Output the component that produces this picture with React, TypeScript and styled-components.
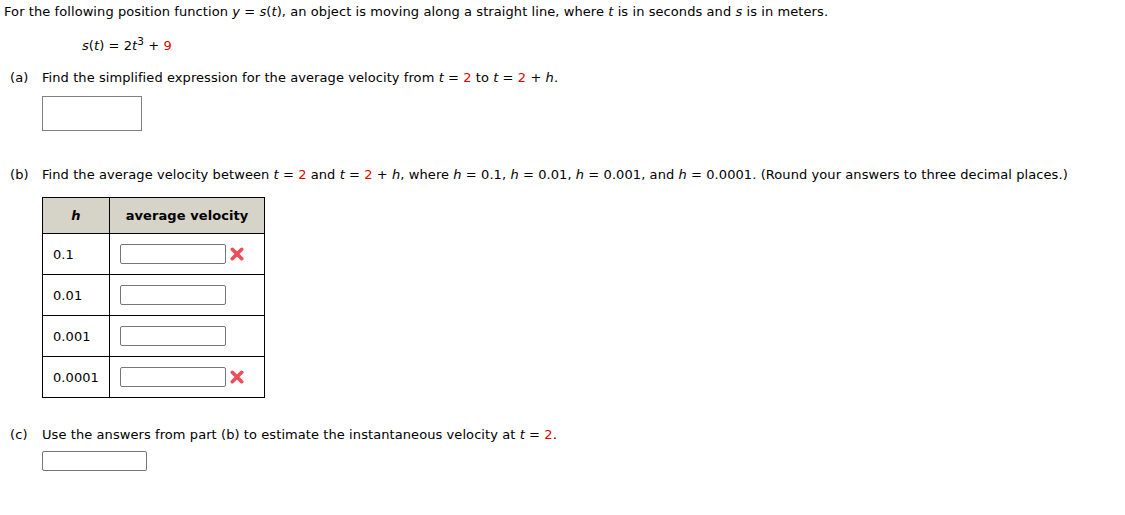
import React from "react";
import styled, { createGlobalStyle } from "styled-components";

const Global = createGlobalStyle`
  html, body { margin: 0; padding: 0; background: #fff; }
  body { font-family: Verdana, "DejaVu Sans", sans-serif; font-size: 13px; color: #000; letter-spacing: 0.08px; }
`;

const Page = styled.div`
  padding: 4px 0 0 4px;
  line-height: 15px;
`;

const Intro = styled.p`
  margin: 0;
`;

const Formula = styled.div`
  margin: 19px 0 0 78px;
`;

const Sup = styled.sup`
  font-size: 10.5px;
  line-height: 0;
`;

const Part = styled.div<{ $top: number }>`
  display: flex;
  margin-top: ${(p) => p.$top}px;
  padding-left: 6px;
`;

const Label = styled.span`
  width: 32px;
  flex: none;
`;

const V = styled.i``;
const Red = styled.span`
  color: #e00000;
`;

const Indent = styled.div<{ $top: number }>`
  margin: ${(p) => p.$top}px 0 0 38px;
`;

const BigBox = styled.div`
  width: 98px;
  height: 33px;
  border: 1px solid #808080;
`;

const Field = styled.div<{ $w: number }>`
  width: ${(p) => p.$w}px;
  height: 18px;
  border: 1px solid #767676;
  border-radius: 2px;
  background: #fff;
`;

const Table = styled.table`
  border-collapse: collapse;
  font-size: 13px;
  th, td { border: 1px solid #000; }
`;

const Head = styled.th<{ $w: number }>`
  background: #d6d3c8;
  height: 35px;
  width: ${(p) => p.$w}px;
  padding: 0;
  font-weight: bold;
  text-align: center;
`;

const Cell = styled.td`
  height: 40px;
  padding: 0 0 0 10px;
  text-align: left;
`;

const AnswerRow = styled.div`
  display: flex;
  align-items: center;
  gap: 4px;
`;

const Wrong = () => (
  <svg width="14" height="14" viewBox="0 0 14 14">
    <path d="M2.3 2.3 L11.7 11.7 M11.7 2.3 L2.3 11.7" stroke="#ec4f57" strokeWidth="3.6" strokeLinecap="round" />
  </svg>
);

const rows: { h: string; wrong: boolean }[] = [
  { h: "0.1", wrong: true },
  { h: "0.01", wrong: false },
  { h: "0.001", wrong: false },
  { h: "0.0001", wrong: true },
];

export default function App() {
  return (
    <Page>
      <Global />
      <Intro>
        For the following position function <V>y</V> = <V>s</V>(<V>t</V>), an object is moving along a straight line, where <V>t</V> is in seconds and <V>s</V> is in meters.
      </Intro>
      <Formula>
        <V>s</V>(<V>t</V>) = 2<V>t</V><Sup>3</Sup> + <Red>9</Red>
      </Formula>
      <Part $top={17}>
        <Label>(a)</Label>
        <span>
          Find the simplified expression for the average velocity from <V>t</V> = <Red>2</Red> to <V>t</V> = <Red>2</Red> + <V>h</V>.
        </span>
      </Part>
      <Indent $top={11}>
        <BigBox />
      </Indent>
      <Part $top={36}>
        <Label>(b)</Label>
        <span>
          Find the average velocity between <V>t</V> = <Red>2</Red> and <V>t</V> = <Red>2</Red> + <V>h</V>, where <V>h</V> = 0.1, <V>h</V> = 0.01, <V>h</V> = 0.001, and <V>h</V> = 0.0001. (Round your answers to three decimal places.)
        </span>
      </Part>
      <Indent $top={15}>
        <Table>
          <thead>
            <tr>
              <Head $w={66}><V>h</V></Head>
              <Head $w={154}>average velocity</Head>
            </tr>
          </thead>
          <tbody>
            {rows.map((r) => (
              <tr key={r.h}>
                <Cell>{r.h}</Cell>
                <Cell>
                  <AnswerRow>
                    <Field $w={104} />
                    {r.wrong && <Wrong />}
                  </AnswerRow>
                </Cell>
              </tr>
            ))}
          </tbody>
        </Table>
      </Indent>
      <Part $top={29}>
        <Label>(c)</Label>
        <span>
          Use the answers from part (b) to estimate the instantaneous velocity at <V>t</V> = <Red>2</Red>.
        </span>
      </Part>
      <Indent $top={9}>
        <Field $w={103} />
      </Indent>
    </Page>
  );
}
